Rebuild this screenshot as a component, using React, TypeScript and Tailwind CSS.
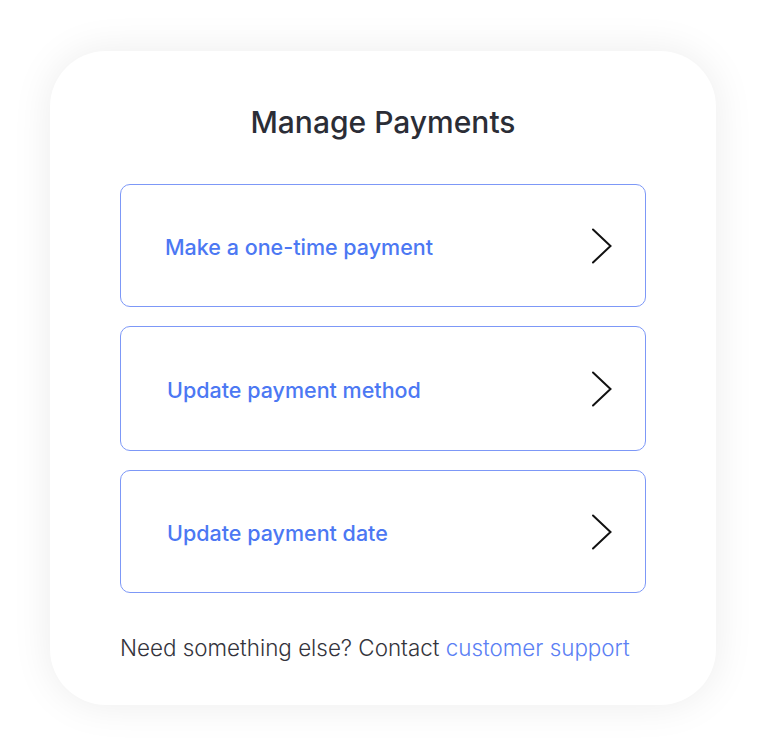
const options = [
  { label: 'Make a one-time payment', h: 'h-[123px]', pl: 'pl-[44px]' },
  { label: 'Update payment method', h: 'h-[125px]', pl: 'pl-[46px]' },
  { label: 'Update payment date', h: 'h-[123px]', pl: 'pl-[46px]' },
];

function Chevron() {
  return (
    <svg width="22" height="36" viewBox="0 0 22 36" fill="none" className="shrink-0">
      <polyline points="2,1.5 19.5,18 2,34.5" stroke="#111" strokeWidth="2" strokeLinecap="round" strokeLinejoin="miter" />
    </svg>
  );
}

export default function App() {
  return (
    <div className="min-h-[755px] w-[766px] bg-white pl-[50px] pt-[51px] font-['Inter',sans-serif]">
      <div className="w-[666px] h-[654px] bg-white rounded-[56px] shadow-[0_0_40px_rgba(0,0,0,0.08)] px-[70px] pt-[53px] flex flex-col">
        <h1 className="text-center text-[30px] leading-[36px] font-medium text-[#2b2d36]">Manage Payments</h1>
        <div className="mt-[44px] flex flex-col gap-[19px]">
          {options.map((o) => (
            <button
              key={o.label}
              className={`${o.h} ${o.pl} w-full border border-[#7d98f7] rounded-[10px] flex items-center justify-between pr-[32px] text-left`}
            >
              <span className="mt-[4px] text-[21.5px] font-medium text-[#4c78f3]">{o.label}</span>
              <Chevron />
            </button>
          ))}
        </div>
        <p className="mt-[38px] text-[22.4px] font-light text-[#34343c] whitespace-nowrap">
          Need something else? Contact <span className="text-[#5b80f4]">customer support</span>
        </p>
      </div>
    </div>
  );
}
